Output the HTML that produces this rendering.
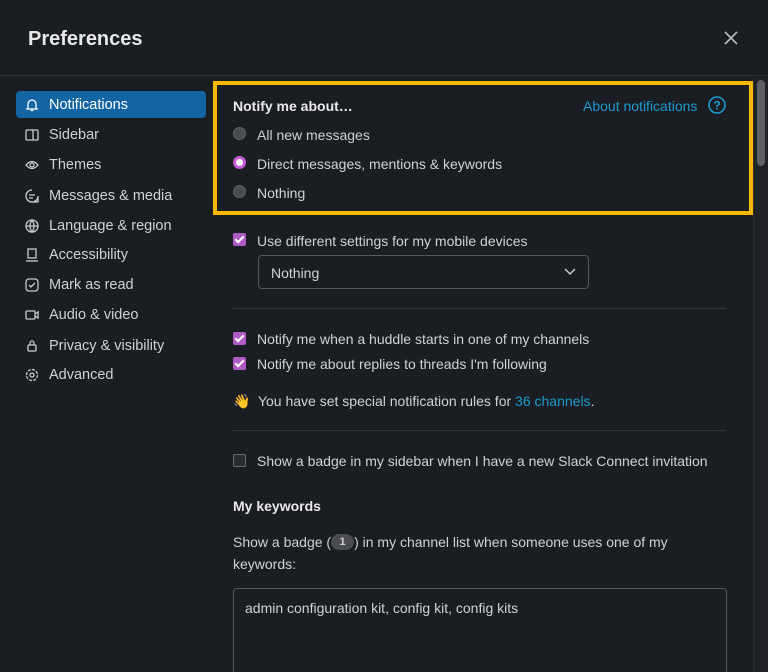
<!DOCTYPE html>
<html><head><style>
*{box-sizing:border-box;margin:0;padding:0}
html,body{width:768px;height:672px;overflow:hidden}
body{background:#1a1d21;font-family:"Liberation Sans",sans-serif;color:#d1d2d3;font-size:14px;position:relative}
.a{position:absolute;white-space:nowrap}
.nav{position:absolute;left:16px;width:190px;height:27px;line-height:29px;padding-left:33px;font-size:14.5px;color:#d1d2d3}
.nav svg{position:absolute;left:9px;top:7px}
.sel{background:#1264a3;border-radius:4px;color:#fff}
.rad{position:absolute;left:233px;width:13px;height:13px;border-radius:50%;background:#4a4c50;border:1px solid #616266}
.cb{position:absolute;left:233px;width:13px;height:13px;border-radius:2px;background:#b05bc5}
.cb:after{content:"";position:absolute;left:4px;top:1px;width:3px;height:7px;border:solid #fff;border-width:0 2px 2px 0;transform:rotate(45deg)}
.t{position:absolute;left:257px;white-space:nowrap;line-height:16px}
.hr{position:absolute;left:233px;width:493px;height:1px;background:#35373b}
.bd{display:inline-block;background:#4a4c50;border-radius:8px;width:23px;height:16px;text-align:center;font-size:11px;font-weight:bold;line-height:16px;vertical-align:top;margin-top:0}
</style></head><body>
<div class="a" style="left:28px;top:28px;font-size:20px;font-weight:bold;color:#e8e8e8">Preferences</div>
<svg class="a" style="left:724px;top:31px" width="14" height="14"><path d="M1 1L13 13M13 1L1 13" stroke="#bbb" stroke-width="1.6"/></svg>
<div class="a" style="left:0;top:75px;width:768px;height:1px;background:#2f3135"></div>

<div class="nav sel" style="top:91px"><svg width="14" height="14" viewBox="0 0 14 14" fill="none" stroke="#fff" stroke-width="1.3"><path d="M3 10V6a4 4 0 018 0v4l1 1H2z M5.5 12.5h3"/></svg>Notifications</div>
<div class="nav" style="top:121px"><svg width="14" height="14" fill="none" stroke="#ccc" stroke-width="1.3"><rect x="1" y="2" width="12" height="10" rx="1"/><path d="M8 2v10"/></svg>Sidebar</div>
<div class="nav" style="top:151px"><svg width="14" height="14" fill="none" stroke="#ccc" stroke-width="1.3"><path d="M1 7q6-7 12 0q-6 7-12 0z"/><circle cx="7" cy="7" r="2"/></svg>Themes</div>
<div class="nav" style="top:182px"><svg width="14" height="14" fill="none" stroke="#ccc" stroke-width="1.3"><path d="M7 1a6 6 0 106 6v6H7"/><path d="M4 6h6M4 9h4"/></svg>Messages &amp; media</div>
<div class="nav" style="top:212px"><svg width="14" height="14" fill="none" stroke="#ccc" stroke-width="1.3"><circle cx="7" cy="7" r="6"/><path d="M1 7h12M7 1q-4 6 0 12q4-6 0-12"/></svg>Language &amp; region</div>
<div class="nav" style="top:241px"><svg width="14" height="14" fill="none" stroke="#ccc" stroke-width="1.3"><rect x="3" y="1" width="8" height="9"/><path d="M1 13h12"/></svg>Accessibility</div>
<div class="nav" style="top:271px"><svg width="14" height="14" fill="none" stroke="#ccc" stroke-width="1.3"><rect x="1" y="1" width="12" height="12" rx="3"/><path d="M4 7l2 2 4-4"/></svg>Mark as read</div>
<div class="nav" style="top:301px"><svg width="14" height="14" fill="none" stroke="#ccc" stroke-width="1.3"><rect x="1" y="3" width="9" height="8" rx="1"/><path d="M10 6l3-2v6l-3-2"/></svg>Audio &amp; video</div>
<div class="nav" style="top:332px"><svg width="14" height="14" fill="none" stroke="#ccc" stroke-width="1.3"><rect x="3" y="6" width="8" height="6" rx="1"/><path d="M5 6V4a2 2 0 014 0v2"/></svg>Privacy &amp; visibility</div>
<div class="nav" style="top:361px"><svg width="14" height="14" fill="none" stroke="#ccc" stroke-width="1.3"><circle cx="7" cy="7" r="2"/><circle cx="7" cy="7" r="5.5" stroke-dasharray="3 1.3"/></svg>Advanced</div>

<div class="a" style="left:213px;top:81px;width:540px;height:134px;border:4px solid #f8b804"></div>
<div class="t" style="left:233px;top:98px;font-weight:bold;color:#e8e8e8">Notify me about…</div>
<div class="t" style="left:583px;top:98px;color:#1d9bd1">About notifications</div>
<svg class="a" style="left:708px;top:96px" width="18" height="18"><circle cx="9" cy="9" r="8" fill="none" stroke="#1d9bd1" stroke-width="1.6"/><text x="9" y="13.5" font-size="12" font-weight="bold" text-anchor="middle" fill="#1d9bd1" font-family="Liberation Sans">?</text></svg>
<div class="rad" style="top:127px"></div><div class="t" style="top:127px">All new messages</div>
<div class="rad" style="top:156px;background:#fff;border:3px solid #c45ed6"></div><div class="t" style="top:156px">Direct messages, mentions &amp; keywords</div>
<div class="rad" style="top:185px"></div><div class="t" style="top:185px">Nothing</div>

<div class="cb" style="top:233px"></div><div class="t" style="top:233px">Use different settings for my mobile devices</div>
<div class="a" style="left:258px;top:255px;width:331px;height:34px;border:1px solid #55575b;border-radius:4px"></div>
<div class="t" style="left:271px;top:265px">Nothing</div>
<svg class="a" style="left:563px;top:267px" width="14" height="10"><path d="M2 2l5 5 5-5" fill="none" stroke="#ccc" stroke-width="1.5"/></svg>
<div class="hr" style="top:308px"></div>
<div class="cb" style="top:332px"></div><div class="t" style="top:331px">Notify me when a huddle starts in one of my channels</div>
<div class="cb" style="top:357px"></div><div class="t" style="top:356px">Notify me about replies to threads I'm following</div>
<div class="t" style="left:233px;top:393px">👋&nbsp; You have set special notification rules for <span style="color:#1d9bd1">36 channels</span>.</div>
<div class="hr" style="top:430px"></div>
<div class="a" style="left:233px;top:454px;width:13px;height:13px;border:1px solid #6a6c70;border-radius:2px;background:#2a2c30"></div>
<div class="t" style="top:453px">Show a badge in my sidebar when I have a new Slack Connect invitation</div>
<div class="t" style="left:233px;top:498px;font-weight:bold;color:#e8e8e8">My keywords</div>
<div class="t" style="left:233px;top:534px">Show a badge (<span class="bd">1</span>) in my channel list when someone uses one of my</div>
<div class="t" style="left:233px;top:556px">keywords:</div>
<div class="a" style="left:233px;top:588px;width:494px;height:100px;border:1px solid #55575b;border-radius:4px"></div>
<div class="t" style="left:245px;top:600px">admin configuration kit, config kit, config kits</div>

<div class="a" style="left:753px;top:78px;width:15px;height:594px;background:#202226;border-left:1px solid #2c2e32"></div>
<div class="a" style="left:757px;top:80px;width:8px;height:86px;background:#5d5f63;border-radius:4px"></div>
</body></html>
